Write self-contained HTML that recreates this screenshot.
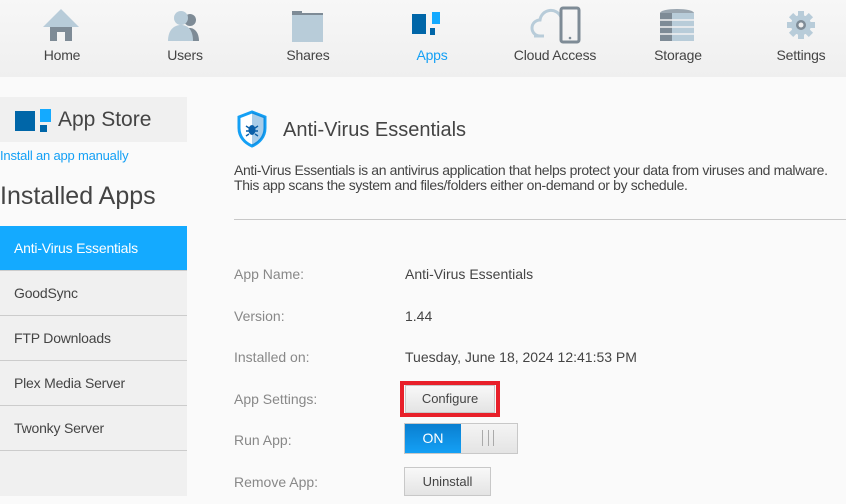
<!DOCTYPE html>
<html><head><meta charset="utf-8">
<style>
*{margin:0;padding:0;box-sizing:border-box}
body{width:846px;height:504px;overflow:hidden;background:#fafafa;font-family:"Liberation Sans",Arial,sans-serif;color:#444;position:relative}
.hdr{position:absolute;left:0;top:0;width:846px;height:77px;background:linear-gradient(#f7f7f7,#efefef)}
.nav{position:absolute;top:47px;font-size:14px;color:#444;text-align:center;width:120px;letter-spacing:-0.2px}
.ic{position:absolute}
.side{position:absolute;left:0;top:97px;width:187px;height:399px;background:#f0f0f0}
.store{position:absolute;left:0;top:97px;width:187px;height:45px;background:#f0f0f0}
.white{position:absolute;left:0;top:142px;width:187px;height:84px;background:#fafafa}
.item{position:absolute;left:0;width:187px;height:45px;border-bottom:1px solid #ccc;font-size:14px;padding:14px 0 0 14px;color:#444;letter-spacing:-0.2px}
.lbl{position:absolute;left:234px;font-size:14px;color:#888}
.val{position:absolute;left:405px;font-size:14px;color:#444}
.btn{position:absolute;background:linear-gradient(#f8f8f8,#e4e4e4);border:1px solid #c8c8c8;font-size:13px;color:#444;text-align:center}
</style></head><body>
<div class="hdr"></div>
<svg class="ic" style="left:42px;top:8px" width="38" height="34"><polygon points="19,1 1,19 37,19" fill="#b8ccd9"/><path d="M8 19h22v14h-7v-9h-8v9H8z" fill="#7e8b96"/></svg>
<div class="nav" style="left:2px">Home</div>
<svg class="ic" style="left:166px;top:8px" width="38" height="34"><circle cx="24" cy="12" r="6" fill="#7e8b96"/><path d="M16 33c0-9 4-13 8-13s9 4 9 13z" fill="#7e8b96"/><circle cx="15" cy="10" r="7" fill="#b8ccd9"/><path d="M2 33c0-11 6-16 13-16s12 5 12 16z" fill="#b8ccd9"/></svg>
<div class="nav" style="left:125px">Users</div>
<svg class="ic" style="left:290px;top:9px" width="34" height="34"><rect x="2" y="4" width="31" height="29" fill="#b8ccd9"/><rect x="2" y="2" width="10" height="4" fill="#7e8b96"/><rect x="12" y="4" width="21" height="2" fill="#7e8b96"/></svg>
<div class="nav" style="left:248px">Shares</div>
<svg class="ic" style="left:410px;top:10px" width="45" height="28"><rect x="2" y="4" width="14" height="20" fill="#0066a8"/><rect x="22" y="2" width="8" height="12" fill="#14aaff"/><rect x="20" y="18" width="5" height="7" fill="#0066a8"/></svg>
<div class="nav" style="left:372px;color:#14a0f5">Apps</div>
<svg class="ic" style="left:528px;top:6px" width="56" height="38"><path d="M12 30a8 8 0 0 1 0-16a11 11 0 0 1 21-3" fill="none" stroke="#b8ccd9" stroke-width="3"/><path d="M6 30h10" stroke="#b8ccd9" stroke-width="3"/><rect x="33" y="2" width="18" height="34" rx="2" fill="none" stroke="#7e8b96" stroke-width="3"/><circle cx="42" cy="32" r="1.3" fill="#7e8b96"/></svg>
<div class="nav" style="left:495px">Cloud Access</div>
<svg class="ic" style="left:658px;top:8px" width="38" height="34"><ellipse cx="19" cy="5" rx="17" ry="4" fill="#9aa6b0"/><rect x="2" y="5" width="34" height="28" fill="#b8ccd9"/><rect x="2" y="5" width="12" height="28" fill="#7e8b96"/><path d="M2 12h34M2 19h34M2 26h34" stroke="#f2f2f2" stroke-width="1.5"/></svg>
<div class="nav" style="left:618px">Storage</div>
<svg class="ic" style="left:785px;top:9px" width="32" height="32" viewBox="0 0 32 32"><g fill="#b8ccd9"><circle cx="16" cy="16" r="10"/><rect x="13" y="2" width="6" height="28"/><rect x="2" y="13" width="28" height="6"/><rect x="13" y="2" width="6" height="28" transform="rotate(45 16 16)"/><rect x="13" y="2" width="6" height="28" transform="rotate(-45 16 16)"/></g><circle cx="16" cy="16" r="5" fill="#7e8b96"/><circle cx="16" cy="16" r="2.5" fill="#f0f0f0"/></svg>
<div class="nav" style="left:741px">Settings</div>

<div class="side"></div>
<div class="white"></div>
<div class="store"></div>
<svg class="ic" style="left:15px;top:109px" width="40" height="26"><rect x="0" y="2" width="20" height="20" fill="#0066a8"/><rect x="25" y="0" width="11" height="13" fill="#14aaff"/><rect x="25" y="16" width="7" height="7" fill="#0066a8"/></svg>
<div style="position:absolute;left:58px;top:108px;font-size:21px;color:#444">App Store</div>
<div style="position:absolute;left:0;top:148px;font-size:13px;color:#14a0f5;letter-spacing:-0.2px">Install an app manually</div>
<div style="position:absolute;left:0;top:182px;font-size:25px;color:#444">Installed Apps</div>
<div class="item" style="top:226px;background:#14aaff;color:#fff">Anti-Virus Essentials</div>
<div class="item" style="top:271px">GoodSync</div>
<div class="item" style="top:316px">FTP Downloads</div>
<div class="item" style="top:361px">Plex Media Server</div>
<div class="item" style="top:406px">Twonky Server</div>

<svg class="ic" style="left:236px;top:110px" width="32" height="38" viewBox="0 0 32 38"><path d="M16 2L3 7v11c0 9 6 15 13 18c7-3 13-9 13-18V7z" fill="#fff" stroke="#14a0f5" stroke-width="3"/><path d="M16 2v34c7-3 13-9 13-18V7z" fill="#0a6fc0" opacity=".35"/><ellipse cx="16" cy="20" rx="3.5" ry="5" fill="#0a5fa8"/><path d="M10 16l3 2M22 16l-3 2M10 21h3M22 21h-3M10 26l3-2M22 26l-3-2" stroke="#0a5fa8" stroke-width="1.4"/></svg>
<div style="position:absolute;left:283px;top:119px;font-size:20px;color:#444">Anti-Virus Essentials</div>
<div style="position:absolute;left:234px;top:163px;font-size:14px;line-height:15px;color:#444;white-space:nowrap;letter-spacing:-0.35px">Anti-Virus Essentials is an antivirus application that helps protect your data from viruses and malware.<br>This app scans the system and files/folders either on-demand or by schedule.</div>
<div style="position:absolute;left:234px;top:219px;width:612px;height:1px;background:#c8c8c8"></div>

<div class="lbl" style="top:266px">App Name:</div><div class="val" style="top:266px">Anti-Virus Essentials</div>
<div class="lbl" style="top:308px">Version:</div><div class="val" style="top:308px">1.44</div>
<div class="lbl" style="top:349px">Installed on:</div><div class="val" style="top:349px">Tuesday, June 18, 2024 12:41:53 PM</div>
<div class="lbl" style="top:391px">App Settings:</div>
<div style="position:absolute;left:400px;top:381px;width:100px;height:36px;border:4px solid #e8202a"></div>
<div class="btn" style="left:405px;top:385px;width:90px;height:28px;line-height:26px">Configure</div>
<div class="lbl" style="top:432px">Run App:</div>
<div style="position:absolute;left:404px;top:423px;width:114px;height:31px;border:1px solid #c8c8c8;background:linear-gradient(#f4f4f4,#e4e4e4)"></div>
<div style="position:absolute;left:405px;top:424px;width:56px;height:29px;background:linear-gradient(#0a7fd0,#14a0f5);color:#fff;font-size:14px;text-align:center;line-height:29px">ON</div>
<div style="position:absolute;left:482px;top:430px;width:12px;height:16px;border-left:1px solid #aaa;border-right:1px solid #aaa"><div style="margin-left:5px;width:1px;height:16px;background:#aaa"></div></div>
<div class="lbl" style="top:474px">Remove App:</div>
<div class="btn" style="left:404px;top:467px;width:87px;height:29px;line-height:27px">Uninstall</div>
</body></html>
